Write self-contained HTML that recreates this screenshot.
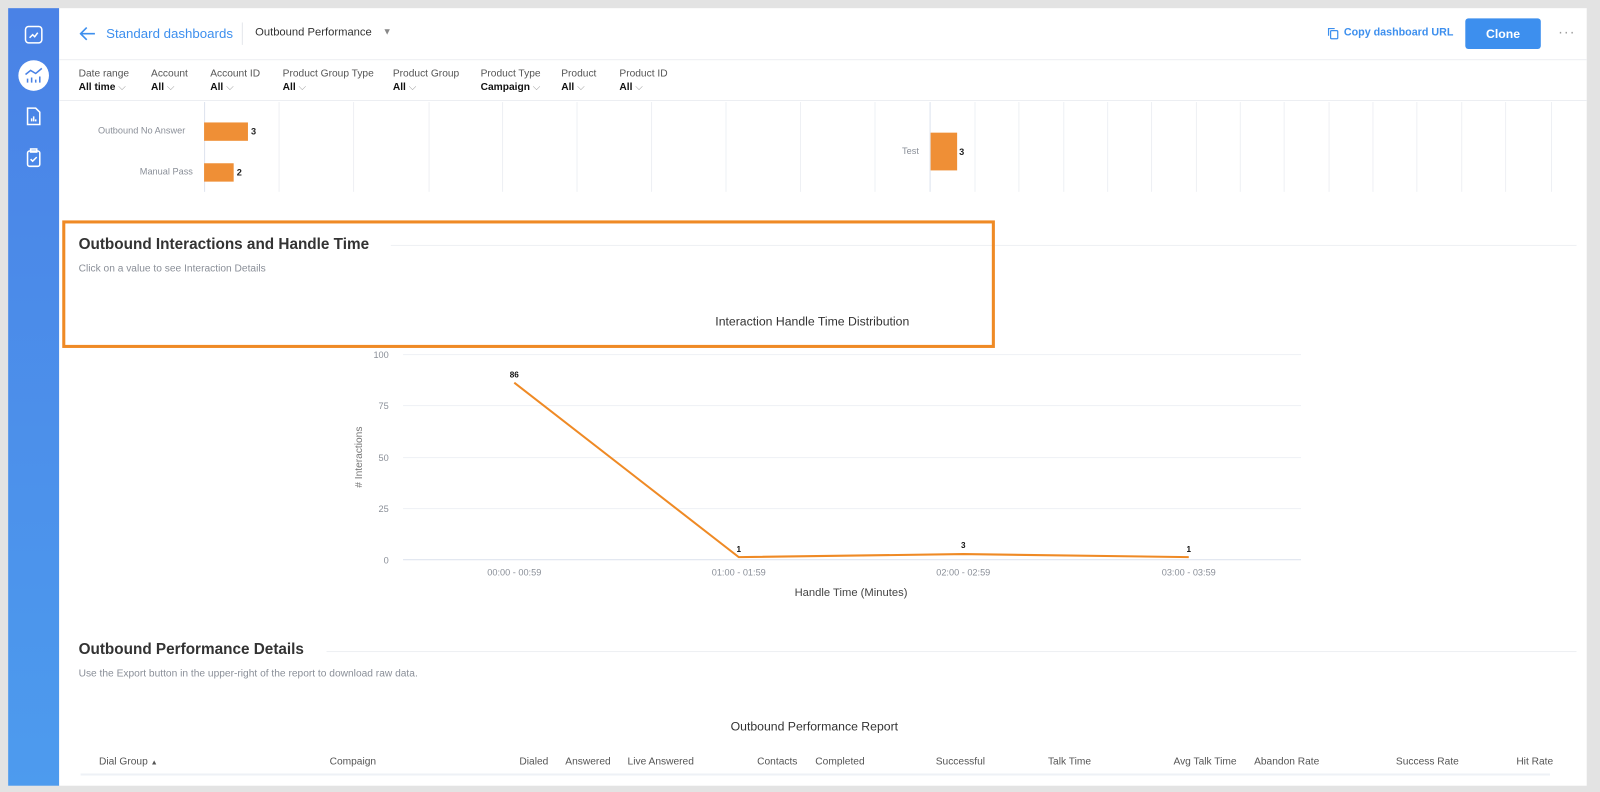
<!DOCTYPE html>
<html><head><meta charset="utf-8"><style>
*{box-sizing:border-box;margin:0;padding:0}
html,body{width:1600px;height:792px;overflow:hidden;background:#e3e3e3}
#w{position:absolute;left:0;top:0;width:1568px;height:776px;transform:scale(1.0204);transform-origin:0 0;font-family:"Liberation Sans",sans-serif}
.side{position:absolute;left:8px;top:8px;width:50px;height:762px;background:linear-gradient(#4a82e6,#4d9bee)}
.main{position:absolute;left:58px;top:8px;width:1497px;height:762px;background:#fff;overflow:hidden}
.a{position:absolute;white-space:nowrap}
.fl{font-size:10px;color:#555}
.fv{font-size:10px;color:#111;font-weight:bold}
.gl{position:absolute;top:100px;height:88px;width:1px;background:#eef0f4}
.lab{font-size:9px;color:#8a8f98}
.th{font-size:10px;color:#555;top:733px}
</style></head><body><div id="w">
<div class="side">
<svg class="a" style="left:15px;top:16px" width="20" height="20" viewBox="0 0 20 20" fill="none" stroke="#fff" stroke-width="1.5"><rect x="2" y="2" width="16" height="16" rx="3"/><path d="M6 13l3-3 2 2 3-4"/></svg>
<div class="a" style="left:10px;top:51px;width:30px;height:30px;border-radius:50%;background:#fff"></div>
<svg class="a" style="left:14px;top:55px" width="22" height="22" viewBox="0 0 22 22" fill="none" stroke="#4a82e6" stroke-width="1.5"><path d="M3 10l5-4 5 3 6-5"/><path d="M5 18v-4M9 18v-5M13 18v-3M17 18v-6"/></svg>
<svg class="a" style="left:16px;top:96px" width="18" height="20" viewBox="0 0 18 20" fill="none" stroke="#fff" stroke-width="1.5"><path d="M3 2h8l4 4v12H3z"/><path d="M7 15v-3M9 15v-5M11 15v-2"/></svg>
<svg class="a" style="left:16px;top:137px" width="18" height="20" viewBox="0 0 18 20" fill="none" stroke="#fff" stroke-width="1.5"><rect x="3" y="3" width="12" height="15" rx="2"/><rect x="6" y="1" width="6" height="3"/><path d="M6 11l2 2 4-4"/></svg>
</div>
<div class="main">
<svg class="a" style="left:20px;top:18px" width="16" height="14" viewBox="0 0 16 14" fill="none" stroke="#3d8fee" stroke-width="1.6"><path d="M15 7H2M7 1L1 7l6 6"/></svg>
<div class="a" style="left:46px;top:17px;font-size:13px;color:#3d8fee">Standard dashboards</div>
<div class="a" style="left:179px;top:14px;width:1px;height:22px;background:#e5e7eb"></div>
<div class="a" style="left:192px;top:18px;font-size:11px;color:#333">Outbound Performance</div>
<div class="a" style="left:317px;top:18px;font-size:9px;color:#888">▼</div>
<svg class="a" style="left:1242px;top:18px" width="12" height="13" viewBox="0 0 12 13" fill="none" stroke="#3d8fee" stroke-width="1.2"><rect x="4" y="4" width="7" height="8" rx="1"/><path d="M2 9V2h6"/></svg>
<div class="a" style="left:1259px;top:18px;font-size:10.5px;color:#3d8fee;font-weight:bold">Copy dashboard URL</div>
<div class="a" style="left:1378px;top:10px;width:74px;height:30px;background:#3d8fee;border-radius:3px;color:#fff;font-size:12px;font-weight:bold;text-align:center;line-height:30px">Clone</div>
<div class="a" style="left:1469px;top:15px;font-size:14px;color:#999;letter-spacing:1px">···</div>
<div class="a" style="left:0;top:50px;width:1500px;height:1px;background:#eceef2"></div>
<div class="a fl" style="left:19px;top:59px">Date range</div><div class="a fv" style="left:19px;top:72px">All time <span style="color:#999;font-weight:normal">⌵</span></div>
<div class="a fl" style="left:90px;top:59px">Account</div><div class="a fv" style="left:90px;top:72px">All <span style="color:#999;font-weight:normal">⌵</span></div>
<div class="a fl" style="left:148px;top:59px">Account ID</div><div class="a fv" style="left:148px;top:72px">All <span style="color:#999;font-weight:normal">⌵</span></div>
<div class="a fl" style="left:219px;top:59px">Product Group Type</div><div class="a fv" style="left:219px;top:72px">All <span style="color:#999;font-weight:normal">⌵</span></div>
<div class="a fl" style="left:327px;top:59px">Product Group</div><div class="a fv" style="left:327px;top:72px">All <span style="color:#999;font-weight:normal">⌵</span></div>
<div class="a fl" style="left:413px;top:59px">Product Type</div><div class="a fv" style="left:413px;top:72px">Campaign <span style="color:#999;font-weight:normal">⌵</span></div>
<div class="a fl" style="left:492px;top:59px">Product</div><div class="a fv" style="left:492px;top:72px">All <span style="color:#999;font-weight:normal">⌵</span></div>
<div class="a fl" style="left:549px;top:59px">Product ID</div><div class="a fv" style="left:549px;top:72px">All <span style="color:#999;font-weight:normal">⌵</span></div>
<div class="a" style="left:0;top:90px;width:1500px;height:1px;background:#eceef2"></div>
<div class="gl" style="left:142px;background:#dde3ee;top:92px;height:88px"></div>
<div class="gl" style="left:215px;top:92px"></div><div class="gl" style="left:288px;top:92px"></div><div class="gl" style="left:362px;top:92px"></div><div class="gl" style="left:434px;top:92px"></div><div class="gl" style="left:507px;top:92px"></div><div class="gl" style="left:580px;top:92px"></div><div class="gl" style="left:653px;top:92px"></div><div class="gl" style="left:726px;top:92px"></div><div class="gl" style="left:799px;top:92px"></div>
<div class="a lab" style="left:38px;top:115px">Outbound No Answer</div>
<div class="a" style="left:142px;top:112px;width:43px;height:18px;background:#ef8f36"></div>
<div class="a" style="left:188px;top:116px;font-size:9px;font-weight:bold;color:#222">3</div>
<div class="a lab" style="left:79px;top:155px">Manual Pass</div>
<div class="a" style="left:142px;top:152px;width:29px;height:18px;background:#ef8f36"></div>
<div class="a" style="left:174px;top:156px;font-size:9px;font-weight:bold;color:#222">2</div>
<div class="gl" style="left:853px;background:#dde3ee;top:92px"></div>
<div class="gl" style="left:897px;top:92px"></div><div class="gl" style="left:940px;top:92px"></div><div class="gl" style="left:984px;top:92px"></div><div class="gl" style="left:1027px;top:92px"></div><div class="gl" style="left:1070px;top:92px"></div><div class="gl" style="left:1114px;top:92px"></div><div class="gl" style="left:1157px;top:92px"></div><div class="gl" style="left:1200px;top:92px"></div><div class="gl" style="left:1244px;top:92px"></div><div class="gl" style="left:1287px;top:92px"></div><div class="gl" style="left:1330px;top:92px"></div><div class="gl" style="left:1374px;top:92px"></div><div class="gl" style="left:1417px;top:92px"></div><div class="gl" style="left:1462px;top:92px"></div>
<div class="a lab" style="left:826px;top:135px">Test</div>
<div class="a" style="left:854px;top:122px;width:26px;height:37px;background:#ef8f36"></div>
<div class="a" style="left:882px;top:136px;font-size:9px;font-weight:bold;color:#222">3</div>
<div class="a" style="left:19px;top:223px;font-size:15px;font-weight:bold;color:#333">Outbound Interactions and Handle Time</div>
<div class="a" style="left:325px;top:232px;width:1162px;height:1px;background:#eef0f3"></div>
<div class="a" style="left:19px;top:250px;font-size:10px;color:#8a8f98">Click on a value to see Interaction Details</div>
<div class="a" style="left:643px;top:300px;font-size:12px;color:#333">Interaction Handle Time Distribution</div>
<div class="a" style="left:3px;top:208px;width:914px;height:125px;border:3px solid #ef8a25"></div>
<svg class="a" style="left:0;top:0" width="1500" height="775">
<g stroke="#eef1f5" stroke-width="1"><line x1="337" y1="339.5" x2="1217" y2="339.5"/><line x1="337" y1="389.5" x2="1217" y2="389.5"/><line x1="337" y1="440.5" x2="1217" y2="440.5"/><line x1="337" y1="490.5" x2="1217" y2="490.5"/></g>
<line x1="337" y1="540.5" x2="1217" y2="540.5" stroke="#dfe5ef"/>
<g font-family="Liberation Sans" font-size="9" fill="#8a8f98" text-anchor="end"><text x="323" y="343">100</text><text x="323" y="393">75</text><text x="323" y="444">50</text><text x="323" y="494">25</text><text x="323" y="544">0</text></g>
<text transform="translate(297,440) rotate(-90)" font-family="Liberation Sans" font-size="10" fill="#777" text-anchor="middle"># Interactions</text>
<polyline points="446,367 666,538 886,535 1107,538" fill="none" stroke="#ef8a25" stroke-width="2"/>
<g font-family="Liberation Sans" font-size="8" font-weight="bold" fill="#111" text-anchor="middle"><text x="446" y="362">86</text><text x="666" y="533">1</text><text x="886" y="529">3</text><text x="1107" y="533">1</text></g>
<g font-family="Liberation Sans" font-size="9" fill="#8a8f98" text-anchor="middle"><text x="446" y="556">00:00 - 00:59</text><text x="666" y="556">01:00 - 01:59</text><text x="886" y="556">02:00 - 02:59</text><text x="1107" y="556">03:00 - 03:59</text></g>
<text x="776" y="576" font-family="Liberation Sans" font-size="11" fill="#444" text-anchor="middle">Handle Time (Minutes)</text>
</svg>
<div class="a" style="left:19px;top:620px;font-size:15px;font-weight:bold;color:#333">Outbound Performance Details</div>
<div class="a" style="left:262px;top:630px;width:1225px;height:1px;background:#eef0f3"></div>
<div class="a" style="left:19px;top:647px;font-size:10px;color:#8a8f98">Use the Export button in the upper-right of the report to download raw data.</div>
<div class="a" style="left:658px;top:697px;font-size:12px;color:#333">Outbound Performance Report</div>
<div class="a th" style="left:39px">Dial Group <span style="font-size:7px">▲</span></div>
<div class="a th" style="left:265px">Compaign</div>
<div class="a th" style="left:451px">Dialed</div>
<div class="a th" style="left:496px">Answered</div>
<div class="a th" style="left:557px">Live Answered</div>
<div class="a th" style="left:684px">Contacts</div>
<div class="a th" style="left:741px">Completed</div>
<div class="a th" style="left:859px">Successful</div>
<div class="a th" style="left:969px">Talk Time</div>
<div class="a th" style="left:1092px">Avg Talk Time</div>
<div class="a th" style="left:1171px">Abandon Rate</div>
<div class="a th" style="left:1310px">Success Rate</div>
<div class="a th" style="left:1428px">Hit Rate</div>
<div class="a" style="left:21px;top:750px;width:1440px;height:2px;background:#eef1f6"></div>
</div>
</div></body></html>
